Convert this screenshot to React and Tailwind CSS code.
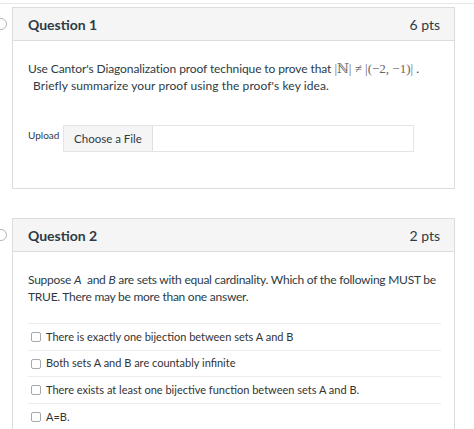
import React from 'react'

const textFont = { fontFamily: 'Lato, "Open Sans", sans-serif' }
const mathFont = { fontFamily: '"Liberation Serif", "DejaVu Serif", serif' }

function Circle() {
    return <div className="absolute left-[-18px] top-[10px] w-[12px] h-[12px] rounded-full border border-[#b5b5b5] bg-white" />
}

function Header({ title, pts }) {
    return (
        <div className="relative h-[33px] bg-[#f5f5f5] border-b border-[#dcdcdc] flex items-center justify-between pl-[15px] pr-[14px]">
            <span className="text-[14px] font-bold text-[#2d3b45]">{title}</span>
            <span className="text-[14px] text-[#2d3b45]">{pts}</span>
        </div>
    )
}

const options = [
    'There is exactly one bijection between sets A and B',
    'Both sets A and B are countably infinite',
    'There exists at least one bijective function between sets A and B.',
    'A=B.',
]

export default function App() {
    return (
        <div className="w-[474px] h-[429px] overflow-hidden bg-white text-[#2d3b45]" style={textFont}>
            <div className="mt-[3px] h-px bg-[#e8e8e8]" />

            {/* Question 1 */}
            <div className="relative ml-[12px] w-[443px] mt-[3px] border border-[#dcdcdc]">
                <Circle />
                <Header title="Question 1" pts="6 pts" />
                <div className="pl-[15px] pr-[10px] pt-[19px] pb-[36px]">
                    <p className="text-[12px] leading-[17px] whitespace-nowrap">
                        <span className="tracking-[-0.1px]">Use Cantor's Diagonalization proof technique to prove that</span>{' '}
                        <span className="text-[13px] text-[#666]" style={mathFont}>
                            |ℕ| ≠ |(−2, −1)|
                        </span>{' '}.
                        <br />
                        <span className="pl-[5px] tracking-[0.1px]">Briefly summarize your proof using the proof's key idea.</span>
                    </p>
                    <div className="mt-[31px] flex items-start">
                        <span className="text-[10px] mt-[3px] w-[35px]">Upload</span>
                        <div className="flex h-[27px] w-[351px] border border-[#e4e4e4]">
                            <div className="w-[89px] bg-[#f5f5f5] border-r border-[#e0e0e0] flex items-center justify-center text-[11.5px]">
                                Choose a File
                            </div>
                        </div>
                    </div>
                </div>
            </div>

            {/* Question 2 */}
            <div className="relative ml-[12px] w-[443px] mt-[29px] border border-[#dcdcdc]">
                <Circle />
                <Header title="Question 2" pts="2 pts" />
                <div className="pl-[15px] pr-[10px] pt-[19px] pb-[20px]">
                    <p className="text-[12px] leading-[17px] tracking-[-0.25px]">
                        Suppose <i>A</i>&nbsp; and <i>B</i> are sets with equal cardinality. Which of the following MUST be TRUE. There may be more than one answer.
                    </p>
                    <div className="mt-[18px] mr-[3px]">
                        {options.map((o) => (
                            <div key={o} className="h-[26.7px] border-t border-[#ececec] flex items-center pl-[3px]">
                                <div className="w-[10px] h-[10px] border border-[#a8a8a8] rounded-[2px] bg-white" />
                                <span className="ml-[5px] text-[11px] text-[#333]">{o}</span>
                            </div>
                        ))}
                    </div>
                </div>
            </div>
        </div>
    )
}
